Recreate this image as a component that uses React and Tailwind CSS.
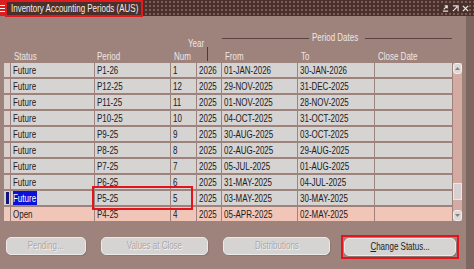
import React from 'react';

const rows = [
  { status: 'Future', period: 'P1-26', num: '1', year: '2026', from: '01-JAN-2026', to: '30-JAN-2026' },
  { status: 'Future', period: 'P12-25', num: '12', year: '2025', from: '29-NOV-2025', to: '31-DEC-2025' },
  { status: 'Future', period: 'P11-25', num: '11', year: '2025', from: '01-NOV-2025', to: '28-NOV-2025' },
  { status: 'Future', period: 'P10-25', num: '10', year: '2025', from: '04-OCT-2025', to: '31-OCT-2025' },
  { status: 'Future', period: 'P9-25', num: '9', year: '2025', from: '30-AUG-2025', to: '03-OCT-2025' },
  { status: 'Future', period: 'P8-25', num: '8', year: '2025', from: '02-AUG-2025', to: '29-AUG-2025' },
  { status: 'Future', period: 'P7-25', num: '7', year: '2025', from: '05-JUL-2025', to: '01-AUG-2025' },
  { status: 'Future', period: 'P6-25', num: '6', year: '2025', from: '31-MAY-2025', to: '04-JUL-2025' },
  { status: 'Future', period: 'P5-25', num: '5', year: '2025', from: '03-MAY-2025', to: '30-MAY-2025', selected: true },
  { status: 'Open', period: 'P4-25', num: '4', year: '2025', from: '05-APR-2025', to: '02-MAY-2025', open: true },
];

const cols = 'grid grid-cols-[6px_83px_75px_25px_24px_75px_76px_77px] gap-x-px';

// the form font is drawn narrow, so squeeze the text horizontally
const T = ({ children, center }) => (
  <span className={`inline-block whitespace-nowrap scale-x-[0.76] ${center ? 'origin-center' : 'origin-left'}`}>
    {children}
  </span>
);

const Cell = ({ children, open }) => (
  <div className={`h-[14px] pl-[2px] leading-[14px] whitespace-nowrap overflow-hidden ${open ? 'bg-[#f1c6b9]' : 'bg-[#d6d3d3]'}`}>
    {children}
  </div>
);

const Button = ({ children, disabled }) => (
  <div
    className={`h-[18px] flex items-center justify-center rounded-[5px] bg-[#d6d3d3] border border-[#ece9e9] shadow-[1px_1px_0_#8e7772] ${
      disabled ? 'text-[#aba7a7] [text-shadow:1px_1px_0_#f4f2f2]' : 'text-[#222]'
    }`}
  >
    <T center>{children}</T>
  </div>
);

export default function App() {
  return (
    <div className="w-[474px] h-[269px] overflow-hidden bg-[#9e837c] relative font-['Liberation_Sans',Arial,sans-serif] text-[10.5px] flex flex-col">
      {/* title bar */}
      <div className="h-[16px] shrink-0 flex items-center bg-[#4a302b] bg-[radial-gradient(circle,#7b5d55_0.8px,transparent_1px)] bg-[length:4px_4px] relative">
        <div className="w-[5px] h-full bg-[#d82020] flex flex-col justify-center gap-[2px]">
          <div className="h-px bg-white" />
          <div className="h-px bg-white" />
          <div className="h-px bg-white" />
        </div>
        <div className="h-[17px] w-[138px] px-[4px] flex items-center border-2 border-[#e01a1f] bg-[#4a302b] text-[#f3ece9] overflow-hidden self-start">
          <T>Inventory Accounting Periods (AUS)</T>
        </div>
        <div className="ml-auto mr-[5px] flex items-center gap-[3px] bg-[#4a302b] pl-[2px]">
          <svg width="7" height="7" viewBox="0 0 8 8">
            <path d="M1 7h6M2 5l4-4M3 1h3v3" stroke="#e8e0de" strokeWidth="1.3" fill="none" />
          </svg>
          <svg width="7" height="7" viewBox="0 0 8 8">
            <path d="M1 1h6v6M1 7l5-5" stroke="#e8e0de" strokeWidth="1.3" fill="none" />
          </svg>
          <svg width="7" height="7" viewBox="0 0 8 8">
            <path d="M1 1l6 6M7 1l-6 6" stroke="#e8e0de" strokeWidth="1.6" fill="none" />
          </svg>
        </div>
      </div>

      <div className="flex flex-1">
        <div className="flex-1 flex flex-col pl-[4px]">
          {/* group headers */}
          <div className={`${cols} h-[30px] pt-[15px] text-[#efe6e3]`}>
            <div className="col-start-4 col-span-2 relative">
              <span className="absolute left-[17px] top-[5px]"><T>Year</T></span>
              <div className="absolute right-[13px] top-[16px] w-px h-[14px] bg-[#4e3a35]" />
            </div>
            <div className="col-start-6 col-span-3 flex items-center gap-[3px] h-[14px]">
              <div className="flex-1 h-px bg-[#5a443f]" />
              <span className="w-[50px]"><T>Period Dates</T></span>
              <div className="flex-1 h-px bg-[#5a443f]" />
            </div>
          </div>
          {/* column labels */}
          <div className={`${cols} h-[17px] items-end text-[#efe6e3] leading-[13px]`}>
            <div />
            <div className="pl-[3px]"><T>Status</T></div>
            <div className="pl-[2px]"><T>Period</T></div>
            <div className="pl-[3px]"><T>Num</T></div>
            <div />
            <div className="pl-[3px]"><T>From</T></div>
            <div className="pl-[3px]"><T>To</T></div>
            <div className="pl-[3px]"><T>Close Date</T></div>
          </div>

          {/* table + scrollbar */}
          <div className="flex gap-px">
            <div className="flex flex-col gap-[2px] text-[#202020]">
              {rows.map((r, i) => (
                <div key={i} className={cols}>
                  <div className={`h-[14px] ${r.selected ? 'bg-[#d6d3d3] px-[1px] py-[1px]' : r.open ? 'bg-[#efc9bd]' : 'bg-[#d9cfcc]'}`}>
                    {r.selected && <div className="h-full w-[3px] ml-[1px] bg-[#141478]" />}
                  </div>
                  <Cell open={r.open}>
                    {r.selected ? (
                      <span className="inline-block bg-[#0b12d6] text-white w-[24px] overflow-visible"><T>{r.status}</T></span>
                    ) : (
                      <T>{r.status}</T>
                    )}
                  </Cell>
                  <Cell open={r.open}><T>{r.period}</T></Cell>
                  <Cell open={r.open}><T>{r.num}</T></Cell>
                  <Cell open={r.open}><T>{r.year}</T></Cell>
                  <Cell open={r.open}><T>{r.from}</T></Cell>
                  <Cell open={r.open}><T>{r.to}</T></Cell>
                  <Cell open={r.open}></Cell>
                </div>
              ))}
            </div>
            <div className="w-[9px] h-[158px] bg-[#d4aaa2] flex flex-col">
              <div className="h-[11px] rounded-[3px] bg-[#dcd8d8] border border-[#f2eeee] flex items-center justify-center">
                <svg width="5" height="3" viewBox="0 0 5 3"><path d="M0 3L2.5 0L5 3z" fill="#8a7f7f" /></svg>
              </div>
              <div className="mt-auto mb-[10px] h-[17px] bg-[#d8d0d0] border border-[#ece6e6]" />
              <div className="h-[11px] rounded-[3px] bg-[#dcd8d8] border border-[#f2eeee] flex items-center justify-center">
                <svg width="5" height="3" viewBox="0 0 5 3"><path d="M0 0L2.5 3L5 0z" fill="#8a7f7f" /></svg>
              </div>
            </div>
          </div>

          {/* buttons */}
          <div className="flex mt-[16px] pl-[2px]">
            <div className="w-[80px]"><Button disabled>Pending...</Button></div>
            <div className="w-[107px] ml-[15px]"><Button disabled>Values at Close</Button></div>
            <div className="w-[107px] ml-[15px]"><Button disabled>Distributions</Button></div>
            <div className="w-[118px] ml-[11px] -mt-[2px] border-2 border-[#e3141c] p-px">
              <Button>
                <span className="underline">C</span>hange Status...
              </Button>
            </div>
          </div>
        </div>
        <div className="w-[8px] bg-[#7e6761]" />
      </div>

      {/* annotation box */}
      <div className="absolute left-[92px] top-[186px] w-[101px] h-[24px] border-2 border-[#e3141c]" />
    </div>
  );
}
